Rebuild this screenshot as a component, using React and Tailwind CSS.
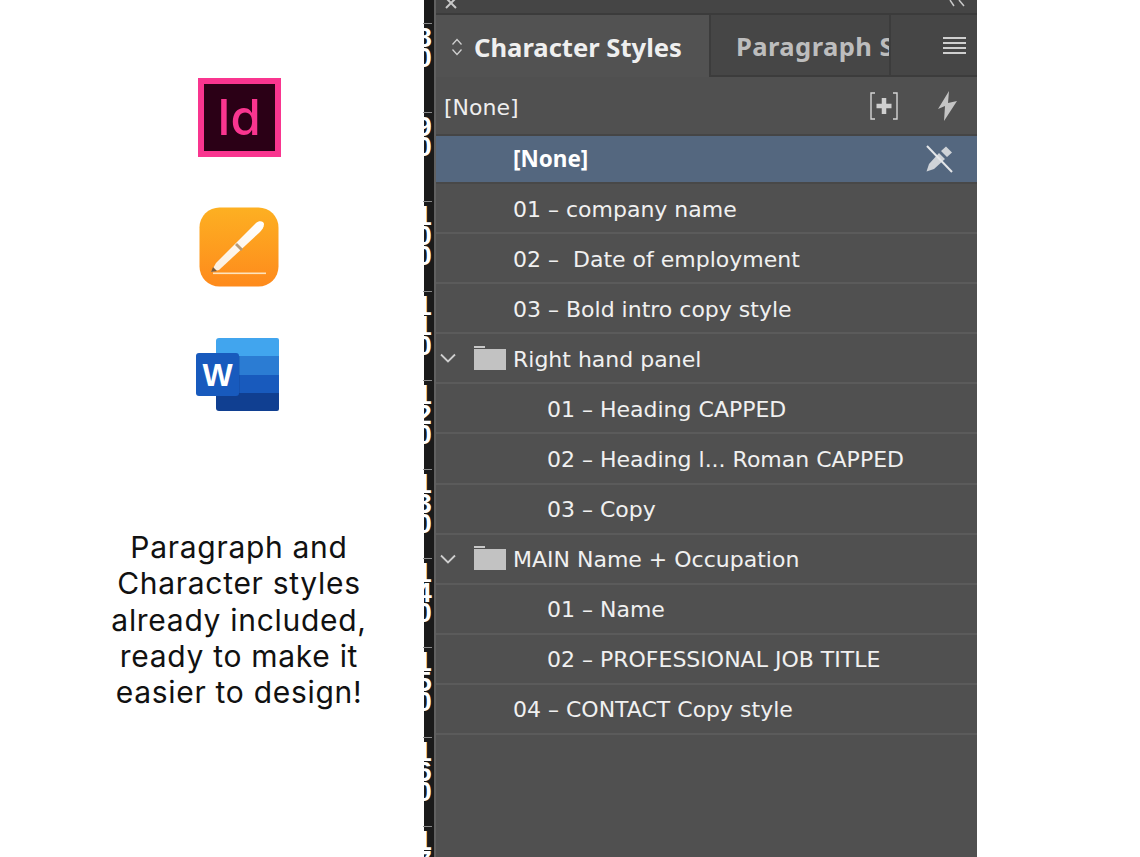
import React from "react";

const UI = { fontFamily: '"Noto Sans", "Open Sans", sans-serif' };
const ROW = { fontFamily: '"DejaVu Sans", "Noto Sans", sans-serif' };

function IdLogo() {
  return (
    <div className="w-[83px] h-[79px] border-[6px] border-[#f9358f] bg-[#2b0016] flex items-center justify-center">
      <span className="text-[#f9358f] text-[49px] leading-none font-medium" style={{ fontFamily: 'Inter, sans-serif' }}>Id</span>
    </div>
  );
}

function PagesLogo() {
  return (
    <svg width="80" height="80" viewBox="0 0 80 80" className="block">
      <defs>
        <linearGradient id="pg" x1="0" y1="0" x2="0" y2="1">
          <stop offset="0" stopColor="#fdb022" />
          <stop offset="1" stopColor="#fe8a1c" />
        </linearGradient>
        <linearGradient id="pn" x1="0" y1="1" x2="1" y2="0">
          <stop offset="0" stopColor="#fbeedd" />
          <stop offset="1" stopColor="#ffffff" />
        </linearGradient>
      </defs>
      <rect x="0.5" y="0.5" width="79" height="79" rx="20" fill="url(#pg)" />
      <path d="M12 65 L17 56 L57 16 C60 13 65 14 65 17 C65 20 63 23 61 25 L20 63 Z" fill="url(#pn)" />
      <path d="M36 38 L42 44 L44 42 L38 36 Z" fill="#b59a78" />
      <path d="M12 65 L14 60 L18 64 Z" fill="#7a5a3a" />
      <rect x="14" y="65.5" width="53" height="1.6" fill="#fde3bd" />
    </svg>
  );
}

function WordLogo() {
  return (
    <svg width="84" height="74" viewBox="0 0 84 74" className="block">
      <path d="M23 0 H81 a2 2 0 0 1 2 2 V18 H20 V3 a3 3 0 0 1 3 -3 Z" fill="#41a5ee" />
      <rect x="20" y="18" width="63" height="19" fill="#2b7cd3" />
      <rect x="20" y="37" width="63" height="18" fill="#185abd" />
      <path d="M20 55 H83 V71 a2 2 0 0 1 -2 2 H23 a3 3 0 0 1 -3 -3 Z" fill="#103f91" />
      <rect x="24" y="18" width="20" height="44" fill="#0e3a86" opacity="0.25" />
      <rect x="0" y="15" width="43" height="43" rx="3" fill="#185abd" />
      <text x="21.5" y="48" textAnchor="middle" fill="#ffffff" fontSize="32" fontWeight="700" fontFamily="Liberation Sans, sans-serif">W</text>
    </svg>
  );
}

function LeftColumn() {
  const lines = ["Paragraph and", "Character styles", "already included,", "ready to make it", "easier to design!"];
  return (
    <div className="w-[424px] shrink-0 bg-white flex flex-col items-center pl-[54px] pt-[78px]">
      <IdLogo />
      <div className="mt-[50px]"><PagesLogo /></div>
      <div className="mt-[51px] -ml-[2px]"><WordLogo /></div>
      <div className="mt-[117px] text-center text-[#111] text-[30px] leading-[36.3px] tracking-[0.7px] whitespace-nowrap" style={{ fontFamily: 'Inter, sans-serif' }}>
        {lines.map((l) => <div key={l}>{l}</div>)}
      </div>
    </div>
  );
}

function Ruler() {
  const marks = ["80", "90", "100", "110", "120", "130", "140", "150", "160", "170"];
  return (
    <div className="w-[10px] shrink-0 bg-[#1a1a1a] pt-[23px] h-[857px]">
      {marks.map((m) => (
        <div key={m} className="h-[89.2px] relative">
          <div className="h-px w-[9px] -ml-[1px] bg-[#8a8a8a]" />
          <div className="absolute top-[5px] left-[-8px] w-[16px] text-center text-white text-[28px] leading-[20px] font-bold whitespace-pre-line" style={{ fontFamily: '"Liberation Sans", sans-serif' }}>
            {m.split("").join("\n")}
          </div>
        </div>
      ))}
    </div>
  );
}

function TopBar() {
  return (
    <div className="h-[15px] bg-[#454545] border-b-2 border-[#3b3b3b] flex justify-between overflow-hidden pl-[8px] pr-[10px]">
      <svg width="16" height="13" viewBox="0 0 16 13" className="block">
        <path d="M2 -2 L12 8 M12 -2 L2 8" stroke="#c8c8c8" strokeWidth="2" fill="none" />
      </svg>
      <svg width="18" height="13" viewBox="0 0 18 13" className="block">
        <path d="M1 0 L5 6 M10 0 L15 6" stroke="#c8c8c8" strokeWidth="1.5" fill="none" />
      </svg>
    </div>
  );
}

function Tabs() {
  return (
    <div className="h-[62px] flex" style={UI}>
      <div className="w-[273px] shrink-0 bg-[#525252] flex items-center pl-[14px] gap-[10px]">
        <svg width="14" height="20" viewBox="0 0 14 20" className="block mt-[2px]">
          <path d="M2.5 7.5 L7 2.5 L11.5 7.5 M2.5 12.5 L7 17.5 L11.5 12.5" stroke="#d0d0d0" strokeWidth="1.3" fill="none" />
        </svg>
        <span className="text-[25.6px] leading-none font-bold text-[#efefef] whitespace-nowrap pt-[4px]">Character Styles</span>
      </div>
      <div className="w-[180px] shrink-0 bg-[#464646] border-b-2 border-l-2 border-[#3c3c3c] overflow-hidden flex items-center pl-[25px]">
        <span className="text-[25.6px] leading-none font-bold text-[#bdbdbd] whitespace-nowrap tracking-[0.4px] pt-[4px]">Paragraph Styles</span>
      </div>
      <div className="flex-1 bg-[#464646] border-b-2 border-l-2 border-[#3c3c3c] flex items-center justify-end pr-[11px]">
        <div className="flex flex-col gap-[3px]">
          <div className="w-[23px] h-[2px] bg-[#cfcfcf]" />
          <div className="w-[23px] h-[2px] bg-[#cfcfcf]" />
          <div className="w-[23px] h-[2px] bg-[#cfcfcf]" />
          <div className="w-[23px] h-[2px] bg-[#cfcfcf]" />
        </div>
      </div>
    </div>
  );
}

function Toolbar() {
  return (
    <div className="h-[59px] border-b-2 border-[#454545] flex items-center pl-[8px] pr-[19px]" style={ROW}>
      <span className="text-[22px] text-[#eeeeee] leading-none pt-[4px]">[None]</span>
      <svg width="28" height="28" viewBox="0 0 28 28" className="block ml-auto mr-[39px]">
        <path d="M5 1 H1 V27 H5 M23 1 H27 V27 H23" stroke="#d4d4d4" strokeWidth="1.4" fill="none" />
        <path d="M14 6 V22 M6.5 14 H21.5" stroke="#cfcfcf" strokeWidth="4.5" fill="none" />
      </svg>
      <svg width="21" height="32" viewBox="0 0 21 32" className="block">
        <path d="M12 1 L1 19 L8 16 L7 31 L20 11 L11 13 Z" fill="#c4c4c4" />
      </svg>
    </div>
  );
}

function SelectedRow() {
  return (
    <div className="h-[48px] bg-[#54677f] flex items-center pl-[77px] pr-[24px] border-b-2 border-[#484848]" style={UI}>
      <span className="text-[22.5px] font-bold text-white leading-none">[None]</span>
      <svg width="28" height="28" viewBox="0 0 28 28" className="block ml-auto">
        <path d="M16 6 L21 1.5 L27 7.5 L22 12 Z M14 8 L20 14 L9 24 L1.5 26.5 L4 19 Z" fill="#cfd3d8" />
        <path d="M2 1 L27 27" stroke="#e4e6e9" strokeWidth="2" fill="none" />
      </svg>
    </div>
  );
}

function Row({ text, indent, folder }) {
  return (
    <div className={"h-[50.1px] flex items-center border-b-2 border-[#5b5b5b] text-[22px] text-[#f0f0f0] leading-none whitespace-pre " + (indent === 2 ? "pl-[111px]" : folder ? "pl-[3px]" : "pl-[77px]")} style={ROW}>
      {folder && (
        <>
          <svg width="18" height="12" viewBox="0 0 18 12" className="block mr-[17px]">
            <path d="M2 2.5 L9 9.5 L16 2.5" stroke="#cfcfcf" strokeWidth="1.8" fill="none" />
          </svg>
          <div className="w-[32px] mr-[7px] -mt-[1px]">
            <div className="w-[11px] h-[2px] bg-[#c8c8c8] mb-[1px]" />
            <div className="w-[32px] h-[21px] bg-[#c2c2c2]" />
          </div>
        </>
      )}
      <span className="pt-[3px]">{text}</span>
    </div>
  );
}

function Panel() {
  const rows = [
    { text: "01 – company name" },
    { text: "02 –  Date of employment" },
    { text: "03 – Bold intro copy style" },
    { text: "Right hand panel", folder: true },
    { text: "01 – Heading CAPPED", indent: 2 },
    { text: "02 – Heading l... Roman CAPPED", indent: 2 },
    { text: "03 – Copy", indent: 2 },
    { text: "MAIN Name + Occupation", folder: true },
    { text: "01 – Name", indent: 2 },
    { text: "02 – PROFESSIONAL JOB TITLE", indent: 2 },
    { text: "04 – CONTACT Copy style" },
  ];
  return (
    <div className="w-[543px] shrink-0 h-[857px] bg-[#505050] border-l-2 border-[#616161] overflow-hidden">
      <TopBar />
      <Tabs />
      <Toolbar />
      <SelectedRow />
      {rows.map((r) => <Row key={r.text} {...r} />)}
    </div>
  );
}

export default function App() {
  return (
    <div className="w-[1140px] h-[857px] bg-white flex overflow-hidden">
      <LeftColumn />
      <Ruler />
      <Panel />
    </div>
  );
}
